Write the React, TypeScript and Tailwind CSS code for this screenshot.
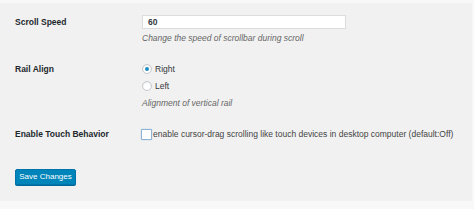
import { useState } from "react";

export default function App() {
  const [speed, setSpeed] = useState("60");
  const [align, setAlign] = useState("right");
  const [touch, setTouch] = useState(false);

  return (
    <div className="w-[474px] h-[209px] bg-[#f8f8f8] overflow-hidden font-['Liberation_Sans',Arial,sans-serif]">
      <div className="mt-[3px] mr-[2px] h-[198px] bg-[#f1f1f1] pl-[15px] pt-[12px]">
        {/* Scroll speed */}
        <div className="flex">
          <div className="w-[127px] h-[14px] flex items-center text-[8.5px] font-bold text-[#23282d]">Scroll Speed</div>
          <div className="flex flex-col">
            <input
              value={speed}
              onChange={(e) => setSpeed(e.target.value)}
              className="w-[204px] h-[14px] bg-white border border-[#dcdcdc] px-[5px] text-[8.5px] font-bold text-[#32373c] outline-none"
            />
            <p className="mt-[4px] h-[10px] leading-[10px] text-[8.5px] italic text-[#666]">
              Change the speed of scrollbar during scroll
            </p>
          </div>
        </div>

        {/* Rail align */}
        <div className="flex mt-[21px]">
          <div className="w-[127px] h-[10px] flex items-center text-[8.5px] font-bold text-[#23282d]">Rail Align</div>
          <div className="flex flex-col">
            {["right", "left"].map((v, i) => (
              <label
                key={v}
                onClick={() => setAlign(v)}
                className={`flex items-center h-[10px] gap-[3px] cursor-pointer ${i ? "mt-[7px]" : ""}`}
              >
                <span className="w-[10px] h-[10px] rounded-full bg-white border border-[#c5c9cd] shadow-[inset_0_1px_2px_rgba(0,0,0,0.08)] flex items-center justify-center">
                  {align === v && <span className="w-[4px] h-[4px] rounded-full bg-[#1e8cbe]" />}
                </span>
                <span className="text-[8.5px] text-[#32373c]">{v === "right" ? "Right" : "Left"}</span>
              </label>
            ))}
            <p className="mt-[7px] h-[10px] leading-[10px] text-[8.5px] italic text-[#666]">
              Alignment of vertical rail
            </p>
          </div>
        </div>

        {/* Touch behavior */}
        <div className="flex mt-[21px]">
          <div className="w-[126px] h-[10px] flex items-center text-[8.5px] font-bold text-[#23282d]">Enable Touch Behavior</div>
          <label onClick={() => setTouch(!touch)} className="flex items-center h-[10px] gap-[1px] cursor-pointer">
            <span className="w-[11px] h-[11px] bg-white border border-[#8fb3d6] rounded-[1px] shadow-[0_0_1px_rgba(30,140,190,0.6)] flex items-center justify-center text-[8px] text-[#1e8cbe]">
              {touch ? "✓" : ""}
            </span>
            <span className="text-[8.5px] text-[#444]">
              enable cursor-drag scrolling like touch devices in desktop computer (default:Off)
            </span>
          </label>
        </div>

        <button className="mt-[30px] w-[61px] h-[16px] rounded-[2px] bg-[#0085ba] border border-[#0073aa] text-white text-[8px] flex items-center justify-center shadow-[0_1px_0_#006799]">
          Save Changes
        </button>
      </div>
    </div>
  );
}
